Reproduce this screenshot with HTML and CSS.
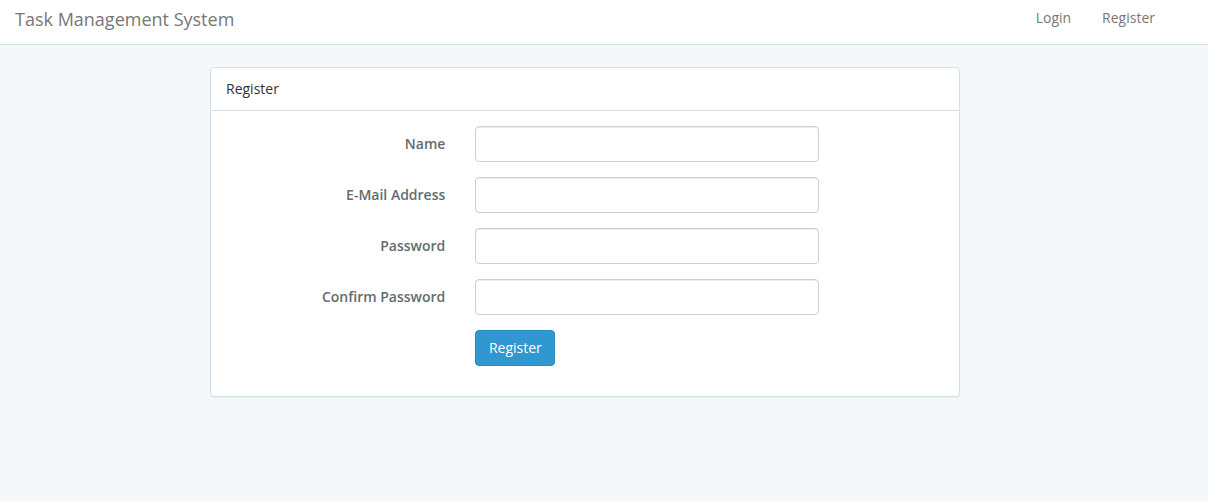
FILE: index.html
```html
<!DOCTYPE html>
<html lang="en">
<head>
<meta charset="utf-8">
<title>Task Management System</title>
<link rel="stylesheet" href="styles.css">
</head>
<body>
<nav class="navbar">
  <a class="brand" href="#">Task Management System</a>
  <ul class="nav-links">
    <li><a href="#">Login</a></li>
    <li><a href="#">Register</a></li>
  </ul>
</nav>
<main class="container">
  <section class="panel">
    <div class="panel-heading">Register</div>
    <div class="panel-body">
      <form class="form">
        <div class="form-row">
          <label class="form-label" for="name">Name</label>
          <div class="form-field"><input class="form-control" id="name" type="text"></div>
        </div>
        <div class="form-row">
          <label class="form-label" for="email">E-Mail Address</label>
          <div class="form-field"><input class="form-control" id="email" type="email"></div>
        </div>
        <div class="form-row">
          <label class="form-label" for="password">Password</label>
          <div class="form-field"><input class="form-control" id="password" type="password"></div>
        </div>
        <div class="form-row">
          <label class="form-label" for="password-confirm">Confirm Password</label>
          <div class="form-field"><input class="form-control" id="password-confirm" type="password"></div>
        </div>
        <div class="form-row">
          <div class="form-label"></div>
          <div class="form-field"><button class="btn-primary" type="button">Register</button></div>
        </div>
      </form>
    </div>
  </section>
</main>
</body>
</html>
```
FILE: styles.css
```css
* { box-sizing: border-box; }
html, body { margin: 0; padding: 0; }
body {
  background: #f5f8fa;
  font-family: "Open Sans", "Lato", sans-serif;
  font-size: 14px;
  line-height: 1.6;
  color: #636b6f;
  height: 501px;
}
a { text-decoration: none; }

.navbar {
  height: 45px;
  background: #fff;
  border-bottom: 1px solid #d3e0e9;
  display: flex;
  align-items: center;
  justify-content: space-between;
  padding: 0 53px 0 15px;
}
.brand {
  font-size: 18px;
  color: #777;
  line-height: 22px;
  padding-bottom: 6px;
}
.nav-links {
  list-style: none;
  margin: 0;
  padding: 0;
  display: flex;
  gap: 31px;
}
.nav-links a {
  color: #777;
  font-size: 14px;
  line-height: 20px;
  display: block;
  padding-bottom: 8px;
}

.container {
  padding-top: 22px;
  display: flex;
  justify-content: flex-start;
  padding-left: 210px;
}
.panel {
  width: 750px;
  background: #fff;
  border: 1px solid #d3e0e9;
  border-radius: 4px;
  box-shadow: 0 1px 1px rgba(0,0,0,0.05);
}
.panel-heading {
  height: 43px;
  padding: 10px 15px;
  color: #333;
  border-bottom: 1px solid #d3e0e9;
  line-height: 22px;
}
.panel-body {
  padding: 15px 0 15px 0;
}
.form-row {
  display: grid;
  grid-template-columns: 249.33px 374px;
  align-items: center;
  margin-bottom: 15px;
}
.form-label {
  text-align: right;
  font-weight: 600;
  padding-right: 15px;
  color: #636b6f;
}
.form-field {
  padding-left: 15px;
}
.form-control {
  display: block;
  width: 344px;
  height: 36px;
  border: 1px solid #ccd0d2;
  border-radius: 4px;
  box-shadow: inset 0 1px 1px rgba(0,0,0,0.075);
  background: #fff;
  font: inherit;
  padding: 6px 12px;
}
.btn-primary {
  display: block;
  height: 36px;
  width: 80px;
  background: #3097d1;
  border: 1px solid #2a88bd;
  border-radius: 4px;
  color: #fff;
  font: inherit;
  font-size: 14px;
  padding: 6px 12px;
}
```
